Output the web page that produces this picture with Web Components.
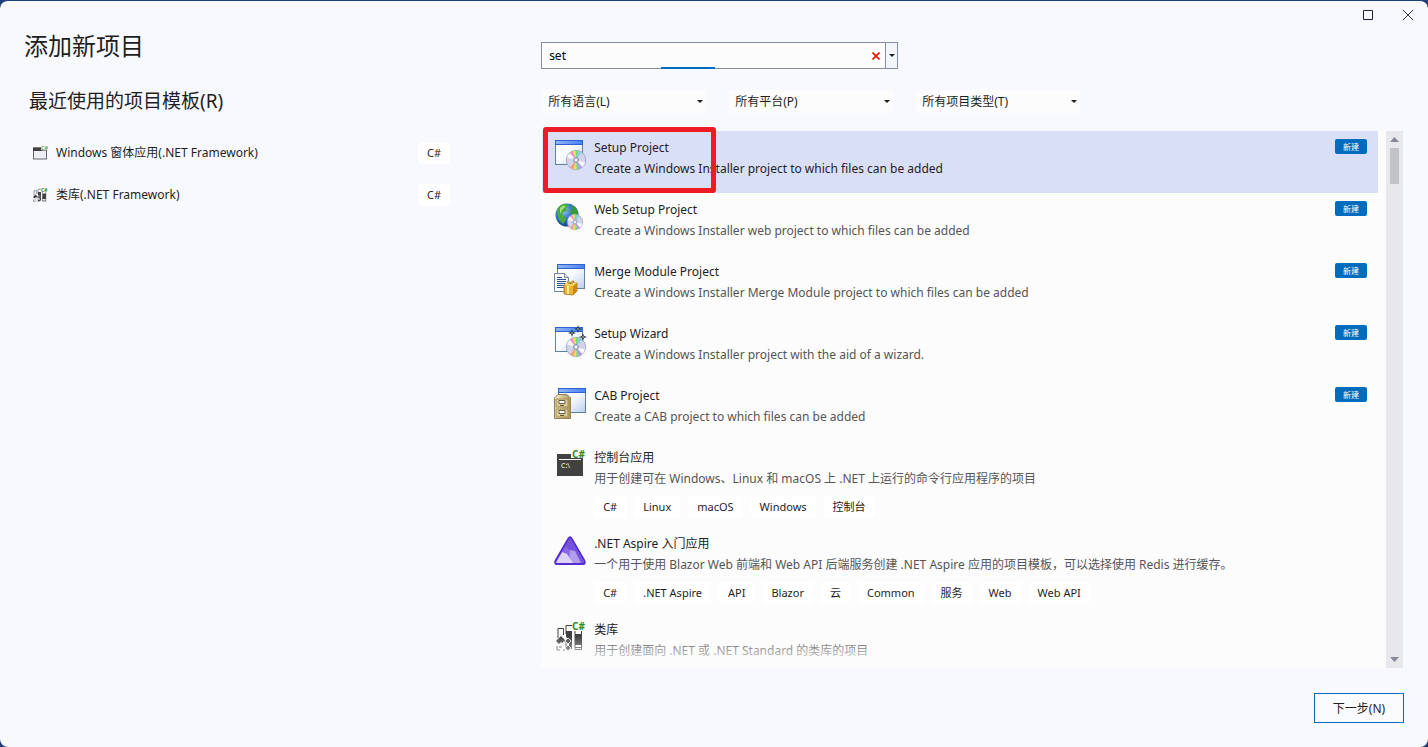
<!DOCTYPE html>
<html lang="zh-CN">
<head>
<meta charset="utf-8">
<title>添加新项目</title>
<style>
    body {
        margin: 0;
        background: #1f3f7d;
        font-family: "Noto Sans", "Noto Sans CJK SC", sans-serif;
        font-size: 12px;
        color: #1e1e1e;
    }
</style>
</head>
<body>
<project-dialog></project-dialog>

<script>
const CD = (cx, cy, r) => `
    <g transform="translate(${cx} ${cy}) scale(${r / 10})">
        <circle r="9.7" fill="#d3d3e8" stroke="#9d9dc4" stroke-width=".8"/>
        <path d="M0 0L-6 -7.2A9.4 9.4 0 0 1 -3.2 -8.8Z" fill="#f58fc0"/>
        <path d="M0 0L-3.2 -8.8A9.4 9.4 0 0 1 -.4 -9.4Z" fill="#f6e04e"/>
        <path d="M0 0L-.4 -9.4A9.4 9.4 0 0 1 2.8 -9Z" fill="#70dc80"/>
        <path d="M0 0L2.8 -9A9.4 9.4 0 0 1 5.6 -7.5Z" fill="#82cdf0"/>
        <path d="M0 0L6 7.2A9.4 9.4 0 0 1 3.2 8.8Z" fill="#c08ff0"/>
        <path d="M0 0L3.2 8.8A9.4 9.4 0 0 1 .4 9.4Z" fill="#6edc8a"/>
        <path d="M0 0L.4 9.4A9.4 9.4 0 0 1 -2.8 9Z" fill="#f2dc4e"/>
        <path d="M0 0L-2.8 9A9.4 9.4 0 0 1 -5.6 7.5Z" fill="#f39a76"/>
        <path d="M0 0L-9 -2.5A9.4 9.4 0 0 1 -6.5 -6.8Z" fill="#f6f6fd"/>
        <path d="M0 0L9 2.5A9.4 9.4 0 0 1 6.5 6.8Z" fill="#f6f6fd"/>
        <circle r="2.6" fill="#c3c9e2" stroke="#7b84ae" stroke-width=".7"/>
        <circle r="1.1" fill="#fff"/>
    </g>`;

const WINDOW = (x, y) => `
    <g transform="translate(${x} ${y})">
        <rect x=".5" y=".5" width="27" height="24" fill="url(#pane)" stroke="#5f819c"/>
        <rect x="0" y="0" width="28" height="5" fill="#2f62d0"/>
        <rect x="1" y="1" width="26" height="3" fill="url(#bar)"/>
    </g>`;

const STAR = (x, y) => `
    <g transform="translate(${x} ${y})">
        <path d="M0 -4L.9 -.9L4 0L.9 .9L0 4L-.9 .9L-4 0L-.9 -.9Z" fill="#1c3134"/>
        <circle r=".8" fill="#dff0e0"/>
    </g>`;

const DEFS = `
    <defs>
        <linearGradient id="pane" x1="0" y1="0" x2="1" y2="1">
            <stop offset="0" stop-color="#fff"/><stop offset=".5" stop-color="#f7faff"/><stop offset="1" stop-color="#b9cdec"/>
        </linearGradient>
        <linearGradient id="bar"><stop offset="0" stop-color="#8db4f8"/><stop offset="1" stop-color="#4a82ee"/></linearGradient>
        <radialGradient id="sea" cx=".35" cy=".3" r=".75">
            <stop offset="0" stop-color="#9cc8f4"/><stop offset=".5" stop-color="#2f74cf"/><stop offset="1" stop-color="#123a80"/>
        </radialGradient>
        <linearGradient id="steel"><stop offset="0" stop-color="#fbf4d4"/><stop offset="1" stop-color="#ab9458"/></linearGradient>
    </defs>`;

const CSHARP = '<text x="18" y="9" font-size="10" font-weight="700" fill="#2f8a2f">C#</text>';

const SHELF = `
    <path d="M4 17V7.500H9.500V14" fill="none" stroke="#414141"/>
    <path d="M12 13V4.500H18" fill="none" stroke="#414141"/>
    <path d="M12 10H18V28H15V19L12 16Z" fill="#414141"/>
    <path d="M21 10V28.500H27.500V10" fill="#fff" stroke="#414141"/>
    <path d="M21 13H28V24H21Z" fill="#414141"/>
    <path d="M21 26.500H28" stroke="#414141"/>
    <path d="M7 15L11 19L8 22L7 21L5 23L2 20L4 18Z" fill="#414141"/>
    <path d="M10 20H14M12 20V27H15M3 25V29H6M9 29H11M5 26H8" fill="none" stroke="#414141"/>
    <path d="M14 17L17 20L14 23L11 20ZM14 24L17 27L14 30L11 27Z" fill="#414141" stroke="#fafafa" stroke-width=".8"/>
    ${CSHARP}`;

const ICONS = {
    setup: WINDOW(1, 1) + CD(22, 21, 10),
    web: `
        <circle cx="13" cy="14" r="11.500" fill="url(#sea)"/>
        <path d="M4 7Q8 2 13 3L15 5L12 7L13 10L9 11L8 14L11 16L12 19L9 23L5 19L3 13Z" fill="#48ad3c"/>
        <path d="M17 4Q23 6 24 12L22 17L18 15L16 11L18 8Z" fill="#389b32"/>
        <path d="M6 7Q9 4 12 5L8 9L6 13Z" fill="#a9e27e"/>` + CD(21, 21, 8),
    merge: WINDOW(3, 1) + `
        <path d="M.500 10.500H10.500L14.500 14.500V28.500H.500Z" fill="#fff" stroke="#71899e"/>
        <path d="M10.500 10.500V14.500H14.500" fill="#dce9f8" stroke="#71899e"/>
        <path d="M3 14.500H8M3 16.500H12M3 18.500H12M3 20.500H11M3 22.500H10M3 24.500H10" stroke="#2a4d9c"/>
        <path d="M10 22L13 20L23 20V28L19 32L10 31Z" fill="#eeb22e" stroke="#a96f10" stroke-width=".8"/>
        <path d="M10 22L19 23L23 20L13 20Z" fill="#fbdc72"/>
        <path d="M19 23L23 20V28L19 32Z" fill="#c98a1a"/>
        <path d="M14 23V31" stroke="#fff0a0" stroke-width="2"/>
        <path d="M15 21Q12 18 14 18Q16 18 16 21Q18 17 20 18Q20 20 16 21" fill="#f9d765" stroke="#a96f10" stroke-width=".8"/>`,
    wizard: WINDOW(1, 2) + CD(22, 22, 10) + STAR(18, 8) + STAR(24, 4) + STAR(29, 12),
    cab: WINDOW(4, 1) + `
        <path d="M.500 11L4 7.500H13L16.500 11V31.500H.500Z" fill="url(#steel)" stroke="#958154"/>
        <rect x="2" y="12" width="12" height="8" fill="#dccb98" stroke="#a28b55"/>
        <rect x="2" y="22" width="12" height="8" fill="#dccb98" stroke="#a28b55"/>
        <path d="M5 13.500H11V16.500H5ZM5 23.500H11V26.500H5Z" fill="#fff" stroke="#6c603f"/>
        <path d="M6 18.500H10M6 28.500H10" stroke="#5a5036"/>`,
    console: `
        <path d="M3 5H17V9H29V27H3Z" fill="#414141"/>
        <path d="M5 10.500H27" stroke="#fafafa"/>
        <text x="7" y="19" font-size="7" fill="#fff">C:\\</text>
        ${CSHARP}`,
    aspire: `
        <path d="M16 2.500L30.500 28H1.500Z" fill="#7551dc"/>
        <path d="M11 11L17 17L23 28H1.500Z" fill="#8b69e2"/>
        <path d="M16 15L21 16L27 28H15Z" fill="#b29cee"/>
        <path d="M8 17L13 19L19 28H1.500Z" fill="#ddd3f7"/>
        <path d="M14.500 3.500Q16 1 17.500 3.500L30.500 26Q31.500 29 29 29H3Q.500 29 1.500 26Z" fill="none" stroke="#512bd4" stroke-width="2"/>`,
    library: SHELF,
    form: `
        <rect x="3" y="6" width="26" height="22" fill="#eeeef8" stroke="#66666e" stroke-width="2"/>
        <path d="M2 5H20V12H2Z" fill="#414141"/>
        <path d="M20 11H28" stroke="#8a8a92" stroke-width="2"/>
        <path d="M18 0H32V10H18Z" fill="#f8f9ff"/>
        <text x="18" y="9" font-size="11" font-weight="700" fill="#5fa45f">C#</text>`,
};

class TemplateIcon extends HTMLElement {
    connectedCallback() {
        const size = this.getAttribute('size') || 32;
        this.attachShadow({ mode: 'open' }).innerHTML = `
            <style>
                :host { display: block; flex: none; width: ${size}px; height: ${size}px; }
                svg { display: block; width: 100%; height: 100%; overflow: visible; }
            </style>
            <svg viewBox="0 0 32 32" aria-hidden="true">${DEFS}${ICONS[this.getAttribute('name')]}</svg>
        `;
    }
}
customElements.define('template-icon', TemplateIcon);

class TagChip extends HTMLElement {
    connectedCallback() {
        this.attachShadow({ mode: 'open' }).innerHTML = `
            <style>
                :host {
                    display: block;
                    flex: none;
                    padding: 0 9px;
                    border-radius: 4px;
                    background: #fff;
                    font-size: 11px;
                    line-height: 22px;
                    white-space: nowrap;
                }
            </style>
            <slot></slot>
        `;
    }
}
customElements.define('tag-chip', TagChip);

class RecentTemplate extends HTMLElement {
    connectedCallback() {
        this.attachShadow({ mode: 'open' }).innerHTML = `
            <style>
                :host { display: flex; align-items: center; gap: 8px; height: 42px; }
                .name { flex: 1; line-height: 18px; white-space: nowrap; }
            </style>
            <template-icon name="${this.getAttribute('icon')}" size="16"></template-icon>
            <span class="name"><slot></slot></span>
            <tag-chip>C#</tag-chip>
        `;
    }
}
customElements.define('recent-template', RecentTemplate);

class TemplateItem extends HTMLElement {
    connectedCallback() {
        const tags = (this.getAttribute('tags') || '').split('|').filter(Boolean);
        this.attachShadow({ mode: 'open' }).innerHTML = `
            <style>
                :host {
                    display: flex;
                    gap: 8px;
                    box-sizing: border-box;
                    min-height: 62px;
                    padding: 6px 11px 9px 12px;
                }
                :host([selected]) { background: #dadff8; }
                template-icon { margin-top: 2px; }
                .body { flex: 1; min-width: 0; line-height: 21px; white-space: nowrap; }
                .desc { color: #555; }
                :host([selected]) .desc { color: #1e1e1e; }
                .tags { display: flex; gap: 8px; margin-top: 7px; }
                .new {
                    flex: none;
                    align-self: flex-start;
                    width: 32px;
                    margin-top: 2px;
                    border-radius: 2px;
                    background: #006cbe;
                    color: #fff;
                    font-size: 8px;
                    line-height: 15px;
                    text-align: center;
                }
            </style>
            <template-icon name="${this.getAttribute('icon')}"></template-icon>
            <div class="body">
                <div>${this.getAttribute('name')}</div>
                <div class="desc"><slot></slot></div>
                ${tags.length ? `<div class="tags">${tags.map(t => `<tag-chip>${t}</tag-chip>`).join('')}</div>` : ''}
            </div>
            ${this.hasAttribute('new') ? '<span class="new">新建</span>' : ''}
        `;
    }
}
customElements.define('template-item', TemplateItem);

class SearchBox extends HTMLElement {
    connectedCallback() {
        this.attachShadow({ mode: 'open' }).innerHTML = `
            <style>
                :host {
                    display: flex;
                    position: relative;
                    box-sizing: border-box;
                    width: 357px;
                    height: 27px;
                    border: 1px solid #858ca6;
                    background: #fcfcfc;
                }
                input {
                    flex: 1;
                    min-width: 0;
                    padding: 0 7px;
                    border: 0;
                    outline: 0;
                    background: none;
                    font: inherit;
                    color: #000;
                }
                button { display: grid; place-items: center; padding: 0; border: 0; background: none; }
                .clear { width: 18px; }
                .more { width: 12px; border-left: 1px solid #858ca6; background: #f3f5fd; }
                .progress { position: absolute; left: 119px; bottom: -1px; width: 54px; height: 2px; background: #006cbe; }
            </style>
            <input type="text" value="set" aria-label="搜索模板">
            <button class="clear" aria-label="清除"><svg width="8" height="8"><path d="M.500 .500L7.500 7.500M7.500 .500L.500 7.500" stroke="#e51400" stroke-width="1.600"/></svg></button>
            <button class="more" aria-label="搜索选项"><svg width="6" height="3"><path d="M0 0H6L3 3Z" fill="#1e1e1e"/></svg></button>
            <div class="progress"></div>
        `;
    }
}
customElements.define('search-box', SearchBox);

class FilterSelect extends HTMLElement {
    connectedCallback() {
        const label = this.getAttribute('label');
        this.attachShadow({ mode: 'open' }).innerHTML = `
            <style>
                :host { display: grid; align-items: center; width: 164px; height: 23px; background: #fcfcfc; }
                select, svg { grid-area: 1 / 1; }
                select {
                    appearance: none;
                    width: 100%;
                    height: 100%;
                    padding: 0 20px 0 6px;
                    border: 0;
                    background: none;
                    font: inherit;
                    color: inherit;
                }
                svg { justify-self: end; margin-right: 3px; pointer-events: none; }
            </style>
            <select aria-label="${label}"><option>${label}</option></select>
            <svg width="6" height="3"><path d="M0 0H6L3 3Z" fill="#1e1e1e"/></svg>
        `;
    }
}
customElements.define('filter-select', FilterSelect);

class ScrollRail extends HTMLElement {
    connectedCallback() {
        this.attachShadow({ mode: 'open' }).innerHTML = `
            <style>
                :host { display: flex; flex-direction: column; flex: none; width: 17px; background: #e8e7ec; }
                button { display: grid; place-items: center; height: 17px; padding: 0; border: 0; background: none; }
                .track { flex: 1; }
                .thumb { height: 36px; margin: 0 4px; background: #c2c3c9; }
            </style>
            <button aria-label="向上滚动"><svg width="9" height="5"><path d="M0 5H9L4.500 0Z" fill="#868999"/></svg></button>
            <div class="track"><div class="thumb"></div></div>
            <button aria-label="向下滚动"><svg width="9" height="5"><path d="M0 0H9L4.500 5Z" fill="#868999"/></svg></button>
        `;
    }
}
customElements.define('scroll-rail', ScrollRail);

class TemplateList extends HTMLElement {
    connectedCallback() {
        this.attachShadow({ mode: 'open' }).innerHTML = `
            <style>
                :host { display: flex; position: relative; min-height: 0; background: #fcfcfc; }
                .view { flex: 1; min-width: 0; overflow: hidden; padding: 0 8px 0 1px; }
                .fade {
                    position: absolute;
                    left: 0;
                    right: 17px;
                    bottom: 0;
                    height: 32px;
                    background: linear-gradient(transparent, #fcfcfc);
                }
                /* red marker round the first result */
                .marker {
                    position: absolute;
                    left: 2px;
                    top: -4px;
                    width: 173px;
                    height: 66px;
                    box-sizing: border-box;
                    border: 5px solid #ed1c24;
                    border-radius: 3px;
                }
            </style>
            <div class="view" role="listbox" aria-label="项目模板"><slot></slot></div>
            <scroll-rail></scroll-rail>
            <div class="fade"></div>
            <div class="marker"></div>
        `;
    }
}
customElements.define('template-list', TemplateList);

class ProjectDialog extends HTMLElement {
    connectedCallback() {
        this.attachShadow({ mode: 'open' }).innerHTML = `
            <style>
                :host {
                    display: flex;
                    flex-direction: column;
                    box-sizing: border-box;
                    height: 100vh;
                    border-top: 1px solid #1f3f7d;
                    border-radius: 8px;
                    background: #f8f9ff;
                }
                .caption { display: flex; justify-content: flex-end; height: 29px; }
                .caption button { display: grid; place-items: center; width: 40px; height: 28px; padding: 0; border: 0; background: none; }
                main {
                    flex: 1;
                    display: grid;
                    grid-template-columns: minmax(0, 3fr) minmax(0, 5fr);
                    min-height: 0;
                    padding: 0 25px 0 24px;
                }
                h1, h2 { margin: 0; font-weight: 400; }
                h1 { font-size: 24px; line-height: 32px; }
                h2 { margin: 25px 0 17px 5px; font-size: 19px; line-height: 28px; }
                .recent { margin: 0 91px 0 8px; }
                .results { display: flex; flex-direction: column; min-height: 0; padding-top: 12px; }
                .filters { display: flex; gap: 23px; margin: 21px 0 18px 1px; }
                template-list { flex: 1; }
                footer { display: flex; justify-content: flex-end; padding: 25px 24px 24px; }
                footer button {
                    width: 90px;
                    height: 30px;
                    padding: 0;
                    border: 1px solid #006cbe;
                    background: #fafbff;
                    font: inherit;
                    color: inherit;
                }
            </style>
            <div class="caption">
                <button aria-label="最大化"><svg width="10" height="10"><path d="M.500 .500H9.500V9.500H.500Z" fill="none" stroke="#1a2440"/></svg></button>
                <button aria-label="关闭"><svg width="10" height="10"><path d="M0 0L10 10M10 0L0 10" stroke="#2e3750"/></svg></button>
            </div>
            <main>
                <section>
                    <h1>添加新项目</h1>
                    <h2>最近使用的项目模板(R)</h2>
                    <div class="recent">
                        <recent-template icon="form">Windows 窗体应用(.NET Framework)</recent-template>
                        <recent-template icon="library">类库(.NET Framework)</recent-template>
                    </div>
                </section>
                <section class="results">
                    <search-box></search-box>
                    <div class="filters">
                        <filter-select label="所有语言(L)"></filter-select>
                        <filter-select label="所有平台(P)"></filter-select>
                        <filter-select label="所有项目类型(T)"></filter-select>
                    </div>
                    <template-list>
                        <template-item role="option" selected new icon="setup" name="Setup Project">Create a Windows Installer project to which files can be added</template-item>
                        <template-item role="option" new icon="web" name="Web Setup Project">Create a Windows Installer web project to which files can be added</template-item>
                        <template-item role="option" new icon="merge" name="Merge Module Project">Create a Windows Installer Merge Module project to which files can be added</template-item>
                        <template-item role="option" new icon="wizard" name="Setup Wizard">Create a Windows Installer project with the aid of a wizard.</template-item>
                        <template-item role="option" new icon="cab" name="CAB Project">Create a CAB project to which files can be added</template-item>
                        <template-item role="option" icon="console" name="控制台应用" tags="C#|Linux|macOS|Windows|控制台">用于创建可在 Windows、Linux 和 macOS 上 .NET 上运行的命令行应用程序的项目</template-item>
                        <template-item role="option" icon="aspire" name=".NET Aspire 入门应用" tags="C#|.NET Aspire|API|Blazor|云|Common|服务|Web|Web API">一个用于使用 Blazor Web 前端和 Web API 后端服务创建 .NET Aspire 应用的项目模板，可以选择使用 Redis 进行缓存。</template-item>
                        <template-item role="option" icon="library" name="类库">用于创建面向 .NET 或 .NET Standard 的类库的项目</template-item>
                    </template-list>
                </section>
            </main>
            <footer><button>下一步(N)</button></footer>
        `;
    }
}
customElements.define('project-dialog', ProjectDialog);
</script>
</body>
</html>
